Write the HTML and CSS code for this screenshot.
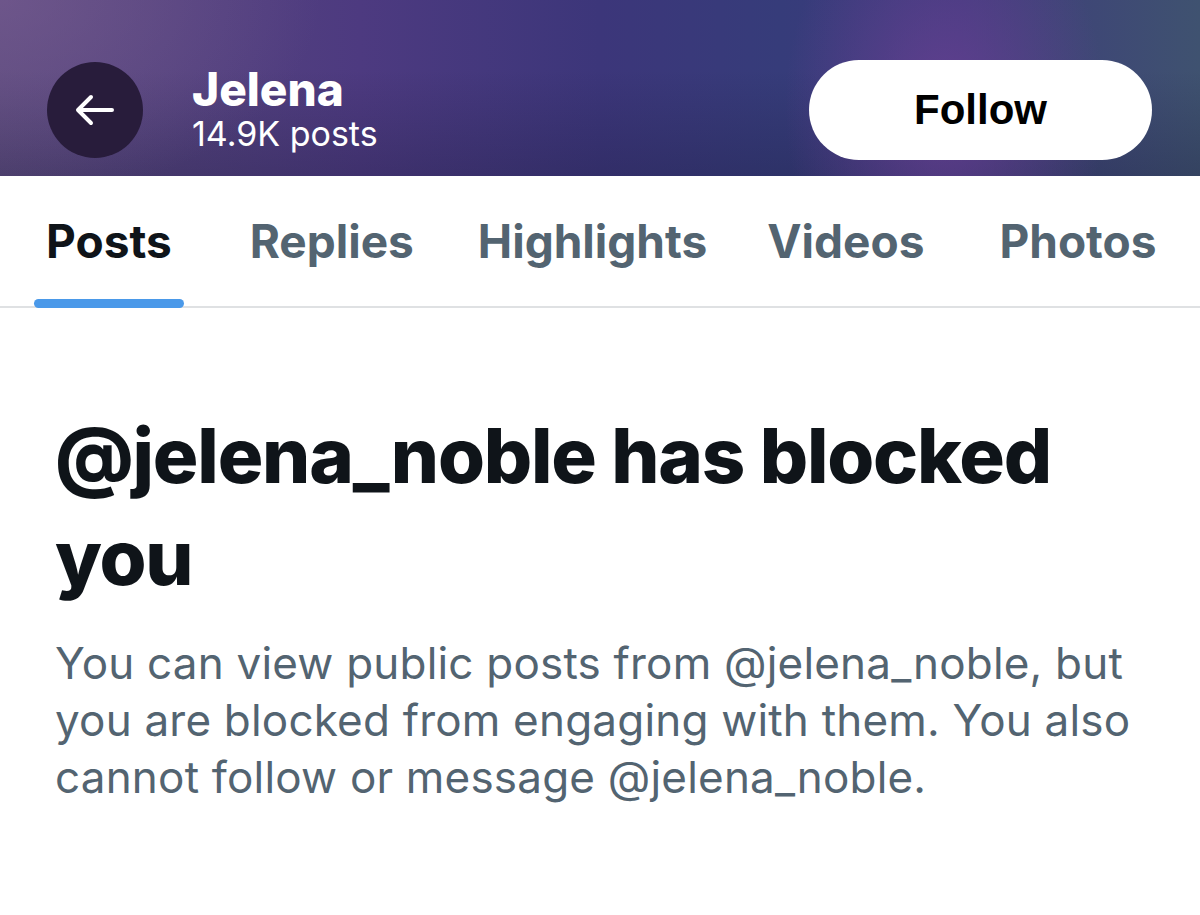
FILE: index.html
```html
<!DOCTYPE html>
<html lang="en">
<head>
    <meta charset="UTF-8">
    <meta name="viewport" content="width=device-width, initial-scale=1.0">
    <title>Jelena</title>
    <link rel="stylesheet" href="styles.css">
</head>
<body>

    <!-- Cabeçalho do perfil -->
    <header class="topo">
        <button class="voltar" aria-label="Back">
            <svg width="40" height="32" viewBox="0 0 40 32" fill="none" stroke="#fff" stroke-width="4" stroke-linecap="round" stroke-linejoin="round">
                <path d="M37 16H4M16 3L3 16l13 13"/>
            </svg>
        </button>
        <div class="perfil">
            <div class="nome">Jelena</div>
            <div class="contagem">14.9K posts</div>
        </div>
        <button class="seguir">Follow</button>
    </header>

    <!-- Abas -->
    <nav class="abas">
        <a class="aba ativa">Posts</a>
        <a class="aba">Replies</a>
        <a class="aba">Highlights</a>
        <a class="aba">Videos</a>
        <a class="aba">Photos</a>
    </nav>

    <!-- Aviso de bloqueio -->
    <main class="aviso">
        <h1>@jelena_noble has blocked you</h1>
        <p>You can view public posts from @jelena_noble, but you are blocked from engaging with them. You also cannot follow or message @jelena_noble.</p>
    </main>

</body>
</html>
```

FILE: styles.css
```css
body {
    margin: 0;
    font-family: Inter, "Noto Sans", sans-serif;
    background-color: #fff;
    color: #0f1419;
}
.topo {
    height: 176px;
    display: flex;
    align-items: center;
    padding: 44px 48px 0 47px;
    box-sizing: border-box;
    background:
        radial-gradient(ellipse 320px 200px at 0% 0%, rgba(125, 95, 150, 0.55), transparent),
        radial-gradient(ellipse 160px 220px at 945px 60%, rgba(110, 65, 150, 0.75), transparent),
        linear-gradient(180deg, rgba(0, 0, 0, 0) 40%, rgba(20, 20, 50, 0.25) 100%),
        linear-gradient(90deg, #5a4a7c 0%, #4d3a80 30%, #3c367a 50%, #363c7a 65%, #3d3b7c 80%, #3f5270 100%);
}
.voltar {
    width: 96px;
    height: 96px;
    border-radius: 50%;
    border: none;
    background-color: #281c3b;
    display: flex;
    align-items: center;
    justify-content: center;
    padding: 0;
}
.perfil {
    margin-left: 49px;
    flex: 1;
    color: #fff;
    margin-top: -2px;
}
.nome {
    font-size: 46px;
    font-weight: 800;
    line-height: 50px;
}
.contagem {
    font-size: 34px;
    line-height: 40px;
}
.seguir {
    width: 343px;
    height: 100px;
    border: none;
    border-radius: 50px;
    background-color: #fff;
    color: #000;
    font-family: "Liberation Sans", Arial, sans-serif;
    font-weight: bold;
    font-size: 42px;
}
.abas {
    display: flex;
    height: 132px;
    border-bottom: 2px solid #dfe1e3;
    box-sizing: border-box;
    padding-left: 34px;
}
.aba {
    position: relative;
    display: flex;
    align-items: center;
    padding: 0 12px;
    margin-left: 40px;
    font-size: 46px;
    font-weight: 700;
    color: #536471;
}
.aba:first-child {
    margin-left: 0;
}
.aba:nth-child(2) {
    margin-left: 54px;
}
.aba:nth-child(4) {
    margin-left: 36px;
}
.aba:nth-child(5) {
    margin-left: 51px;
}
.aba.ativa {
    color: #0f1419;
}
.aba.ativa::after {
    content: "";
    position: absolute;
    left: 0;
    right: 0;
    bottom: -2px;
    height: 9px;
    border-radius: 5px;
    background-color: #4a99e9;
}
.aviso {
    padding: 96px 60px 0 55px;
}
.aviso h1 {
    margin: 0;
    font-size: 76px;
    font-weight: 800;
    line-height: 102px;
    letter-spacing: -1.2px;
}
.aviso p {
    margin: 27px 0 0;
    font-size: 44px;
    line-height: 57px;
    letter-spacing: 0.2px;
    color: #536471;
}
```
